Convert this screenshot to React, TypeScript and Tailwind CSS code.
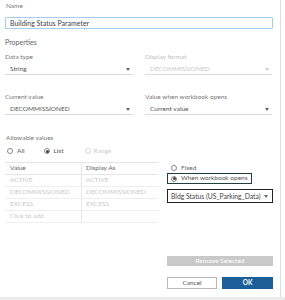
const rows = [
  { value: 'ACTIVE', display: 'ACTIVE' },
  { value: 'DECOMMISSIONED', display: 'DECOMMISSIONED' },
  { value: 'EXCESS', display: 'EXCESS' },
];

function Caret({ muted = false }: { muted?: boolean }) {
  return (
    <svg width="4" height="3" viewBox="0 0 4 3" className={muted ? 'fill-[#cccccc]' : 'fill-[#666]'}>
      <path d="M0 0h4L2 3z" />
    </svg>
  );
}

function Radio({ checked = false, muted = false }: { checked?: boolean; muted?: boolean }) {
  return (
    <span
      className={`flex h-[6px] w-[6px] shrink-0 items-center justify-center rounded-full border ${
        muted ? 'border-[#d8d8d8]' : 'border-[#888]'
      }`}
    >
      {checked && <span className="h-[3px] w-[3px] rounded-full bg-[#444]" />}
    </span>
  );
}

function Field({
  label,
  value,
  muted = false,
}: {
  label: string;
  value: string;
  muted?: boolean;
}) {
  return (
    <div className="flex flex-col">
      <span className={`h-[8px] leading-[8px] ${muted ? 'text-[#c2c2c2]' : 'text-[#777]'}`}>{label}</span>
      <div className="mt-[4px] flex h-[10px] items-center justify-between border-b border-[#dadada] pb-[1px] pl-[5px] pr-[3px]">
        <span className={muted ? 'text-[#c8c8c8]' : 'text-[#555]'}>{value}</span>
        <Caret muted={muted} />
      </div>
    </div>
  );
}

export default function App() {
  return (
    <div className="h-[300px] w-[285px] overflow-hidden bg-white font-['Lato',sans-serif] text-[6.5px] leading-none">
      <div className="flex h-[297px] w-[281px] flex-col border-r border-[#dedede] pl-[5px] pr-[7px]">
        {/* Name */}
        <span className="mt-[2px] h-[8px] pl-[1px] leading-[8px] text-[#777]">Name</span>
        <div className="mt-[7px] flex h-[12px] items-center rounded-[1px] border border-[#a3cdeb] pl-[4px] text-[7px] text-[#444]">
          Building Status Parameter
        </div>

        <span className="mt-[9px] h-[8px] text-[7px] leading-[8px] text-[#666]">Properties</span>

        {/* Properties grid */}
        <div className="mt-[7px] grid grid-cols-[128px_127px] gap-x-[12px] gap-y-[18px]">
          <Field label="Data type" value="String" />
          <Field label="Display format" value="DECOMMISSIONED" muted />
          <Field label="Current value" value="DECOMMISSIONED" />
          <Field label="Value when workbook opens" value="Current value" />
        </div>

        {/* Allowable values */}
        <span className="mt-[19px] h-[8px] pl-[1px] leading-[8px] text-[#777]">Allowable values</span>
        <div className="mt-[5px] flex h-[8px] items-center">
          <div className="ml-[2px] flex items-center gap-[4px] text-[#555]">
            <Radio />
            <span>All</span>
          </div>
          <div className="ml-[20px] flex items-center gap-[3px] text-[#555]">
            <Radio checked />
            <span>List</span>
          </div>
          <div className="ml-[21px] flex items-center gap-[3px] text-[#cccccc]">
            <Radio muted />
            <span>Range</span>
          </div>
        </div>

        {/* List + options */}
        <div className="mt-[7px] flex flex-1">
          <div className="w-[153px] self-start border-t border-[#e6e6e6]">
            <div className="grid h-[12px] grid-cols-[77px_1fr] border-b border-[#e6e6e6] text-[#666]">
              <span className="flex items-center border-r border-[#e6e6e6] pl-[5px]">Value</span>
              <span className="flex items-center pl-[4px]">Display As</span>
            </div>
            {rows.map((r) => (
              <div key={r.value} className="grid h-[12px] grid-cols-[77px_1fr] border-b border-[#eeeeee] text-[#c9c9c9]">
                <span className="flex items-center border-r border-[#e6e6e6] pl-[5px]">{r.value}</span>
                <span className="flex items-center pl-[4px]">{r.display}</span>
              </div>
            ))}
            <div className="grid h-[12px] grid-cols-[77px_1fr] border-b border-[#eeeeee] text-[#c9c9c9]">
              <span className="flex items-center border-r border-[#e6e6e6] pl-[5px]">Click to add</span>
              <span />
            </div>
          </div>

          <div className="ml-[9px] flex flex-1 flex-col whitespace-nowrap pb-[8px] text-[6.5px]">
            <div className="ml-[4px] mt-[2px] flex h-[8px] items-center gap-[4px] text-[#666]">
              <Radio />
              <span>Fixed</span>
            </div>
            <div className="mt-[1px] flex h-[11px] w-[85px] items-center gap-[4px] border border-[#213f3f] pl-[3px] text-[#555]">
              <Radio checked />
              <span>When workbook opens</span>
            </div>
            <div className="mt-[5px] flex h-[14px] items-center justify-between border-[1.5px] border-[#222] pl-[3px] pr-[4px] text-[6.75px] text-[#444]">
              <span>Bldg Status (US_Parking_Data)</span>
              <Caret />
            </div>

            <div className="mt-auto flex h-[10px] items-center justify-center bg-[#c9c9c9] text-white">
              Remove Selected
            </div>
            <div className="mt-[11px] flex h-[12px] gap-[5px]">
              <div className="flex w-[50px] items-center justify-center border border-[#b8b8b8] text-[#555]">Cancel</div>
              <div className="flex flex-1 items-center justify-center bg-[#1c5f98] font-bold text-white">OK</div>
            </div>
          </div>
        </div>
      </div>
      <div className="h-[3px] w-full bg-[#ebebeb]" />
    </div>
  );
}
